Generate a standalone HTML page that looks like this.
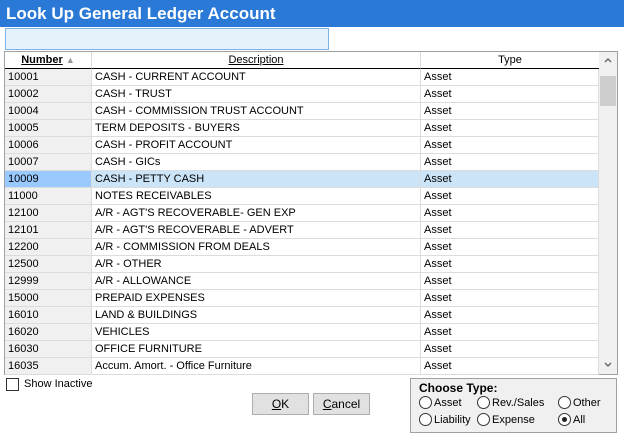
<!DOCTYPE html>
<html><head><meta charset="utf-8"><style>
*{margin:0;padding:0;box-sizing:border-box}
body{width:624px;height:434px;background:#fff;font-family:"Liberation Sans",sans-serif;font-size:11px;color:#000;position:relative;overflow:hidden}
.title{position:absolute;left:0;top:0;width:624px;height:27px;background:#2b79d6;color:#fff;font-weight:bold;font-size:17px;padding:4px 0 0 6px}
.search{position:absolute;left:5px;top:28px;width:324px;height:22px;background:#e5f1fb;border:1px solid #7eb4ea}
.grid{position:absolute;left:4px;top:51px;width:614px;height:324px;border:1px solid #a0a0a0}
.hdr{position:absolute;top:0;height:17px;border-bottom:1px solid #000;text-align:center;line-height:16px}
.row{position:absolute;left:0;width:594px;height:17px}
.row div{position:absolute;top:0;height:17px;line-height:16px;padding-left:3px;border-bottom:1px solid #dcdcdc;border-right:1px solid #dcdcdc;white-space:nowrap}
.c1{left:0;width:87px;background:#f0f0f0}
.c2{left:87px;width:329px}
.c3{left:416px;width:178px}
.sel .c1{background:#99c9ff}.sel .c2,.sel .c3{background:#cce4f7}
.sb{position:absolute;left:594px;top:0;width:18px;height:322px;background:#f0f0f0}
.btn{position:absolute;top:393px;height:22px;background:#e1e1e1;border:1px solid #adadad;text-align:center;line-height:20px;font-size:12px}
.box{position:absolute;left:410px;top:378px;width:207px;height:55px;background:#f0f0f0;border:1px solid #a0a0a0}
.r{position:absolute;font-size:11px;line-height:13px;white-space:nowrap}
.r i{display:inline-block;width:13px;height:13px;border:1px solid #333;border-radius:50%;background:#fff;vertical-align:-3px;margin-right:2px;position:relative}
.r i.on:after{content:"";position:absolute;left:3px;top:3px;width:5px;height:5px;border-radius:50%;background:#222}
</style></head><body>
<div class="title">Look Up General Ledger Account</div>
<div class="search"></div>
<div class="grid">
<div class="hdr" style="left:0;width:87px;border-right:1px solid #dcdcdc"><b><u>Number</u></b> <span style="color:#999;font-size:9px">▲</span></div>
<div class="hdr" style="left:87px;width:329px;border-right:1px solid #dcdcdc"><u>Description</u></div>
<div class="hdr" style="left:416px;width:178px">Type</div>
<div class="row" style="top:17px"><div class="c1">10001</div><div class="c2">CASH - CURRENT ACCOUNT</div><div class="c3">Asset</div></div>
<div class="row" style="top:34px"><div class="c1">10002</div><div class="c2">CASH - TRUST</div><div class="c3">Asset</div></div>
<div class="row" style="top:51px"><div class="c1">10004</div><div class="c2">CASH - COMMISSION TRUST ACCOUNT</div><div class="c3">Asset</div></div>
<div class="row" style="top:68px"><div class="c1">10005</div><div class="c2">TERM DEPOSITS - BUYERS</div><div class="c3">Asset</div></div>
<div class="row" style="top:85px"><div class="c1">10006</div><div class="c2">CASH - PROFIT ACCOUNT</div><div class="c3">Asset</div></div>
<div class="row" style="top:102px"><div class="c1">10007</div><div class="c2">CASH - GICs</div><div class="c3">Asset</div></div>
<div class="row sel" style="top:119px"><div class="c1">10009</div><div class="c2">CASH - PETTY CASH</div><div class="c3">Asset</div></div>
<div class="row" style="top:136px"><div class="c1">11000</div><div class="c2">NOTES RECEIVABLES</div><div class="c3">Asset</div></div>
<div class="row" style="top:153px"><div class="c1">12100</div><div class="c2">A/R - AGT'S RECOVERABLE- GEN EXP</div><div class="c3">Asset</div></div>
<div class="row" style="top:170px"><div class="c1">12101</div><div class="c2">A/R - AGT'S RECOVERABLE - ADVERT</div><div class="c3">Asset</div></div>
<div class="row" style="top:187px"><div class="c1">12200</div><div class="c2">A/R - COMMISSION FROM DEALS</div><div class="c3">Asset</div></div>
<div class="row" style="top:204px"><div class="c1">12500</div><div class="c2">A/R - OTHER</div><div class="c3">Asset</div></div>
<div class="row" style="top:221px"><div class="c1">12999</div><div class="c2">A/R - ALLOWANCE</div><div class="c3">Asset</div></div>
<div class="row" style="top:238px"><div class="c1">15000</div><div class="c2">PREPAID EXPENSES</div><div class="c3">Asset</div></div>
<div class="row" style="top:255px"><div class="c1">16010</div><div class="c2">LAND &amp; BUILDINGS</div><div class="c3">Asset</div></div>
<div class="row" style="top:272px"><div class="c1">16020</div><div class="c2">VEHICLES</div><div class="c3">Asset</div></div>
<div class="row" style="top:289px"><div class="c1">16030</div><div class="c2">OFFICE FURNITURE</div><div class="c3">Asset</div></div>
<div class="row" style="top:306px"><div class="c1">16035</div><div class="c2">Accum. Amort. - Office Furniture</div><div class="c3">Asset</div></div>
<div class="sb">
<svg style="position:absolute;left:5px;top:5px" width="8" height="6"><path d="M1 5 L4 2 L7 5" stroke="#606060" stroke-width="1.3" fill="none"/></svg>
<div style="position:absolute;left:1px;top:24px;width:16px;height:30px;background:#cdcdcd"></div>
<svg style="position:absolute;left:5px;top:310px" width="8" height="6"><path d="M1 1 L4 4 L7 1" stroke="#606060" stroke-width="1.3" fill="none"/></svg>
</div>
</div>
<div style="position:absolute;left:6px;top:378px;width:13px;height:13px;border:1px solid #333;background:#fff"></div>
<div style="position:absolute;left:24px;top:378px;font-size:11px">Show Inactive</div>
<div class="btn" style="left:252px;width:57px"><u>O</u>K</div>
<div class="btn" style="left:313px;width:57px"><u>C</u>ancel</div>
<div class="box">
<div class="r" style="left:8px;top:3px;font-weight:bold;font-size:12px">Choose Type:</div>
<div class="r" style="left:8px;top:17px"><i></i>Asset</div>
<div class="r" style="left:66px;top:17px"><i></i>Rev./Sales</div>
<div class="r" style="left:147px;top:17px"><i></i>Other</div>
<div class="r" style="left:8px;top:34px"><i></i>Liability</div>
<div class="r" style="left:66px;top:34px"><i></i>Expense</div>
<div class="r" style="left:147px;top:34px"><i class="on"></i>All</div>
</div>
</body></html>
